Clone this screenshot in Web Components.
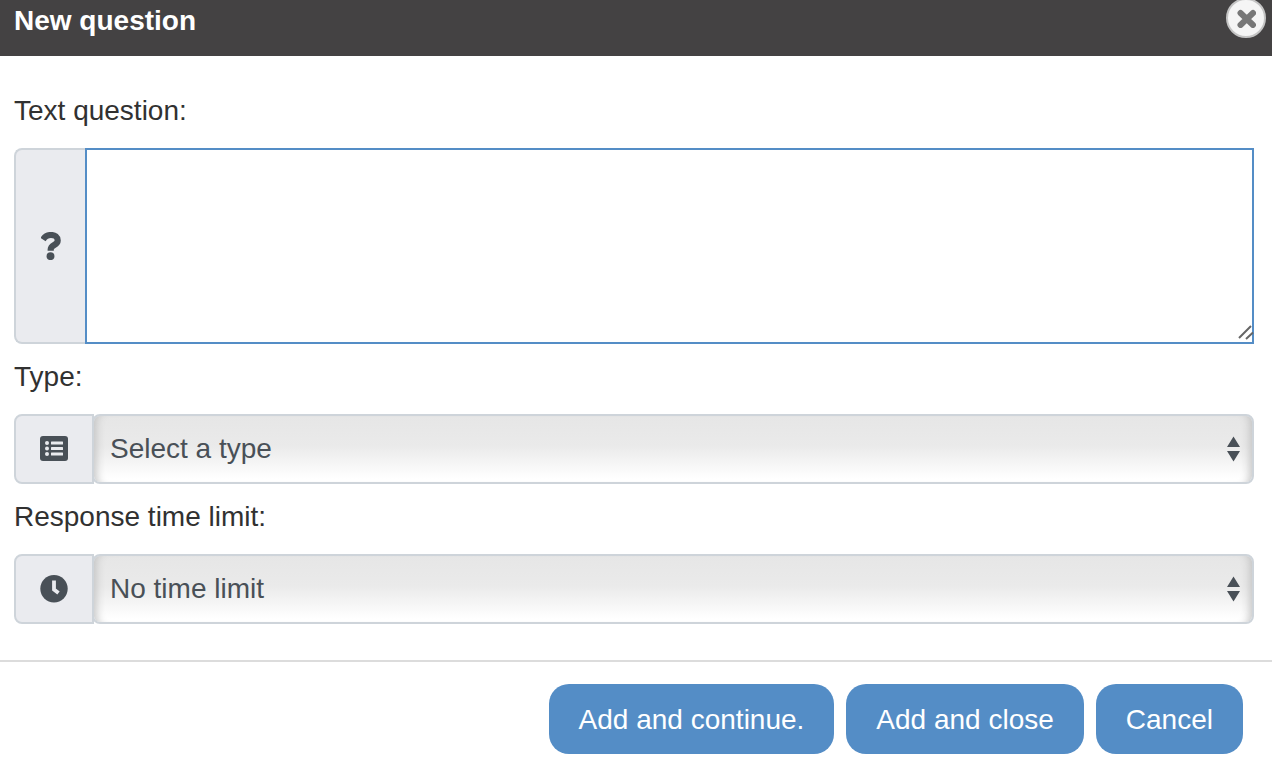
<!DOCTYPE html>
<html lang="en">
<head>
<meta charset="utf-8">
<meta name="viewport" content="width=device-width, initial-scale=1">
<title>New question</title>
<style>
  body {
    margin: 0;
    background: #fff;
    color: #313131;
    font: 28px/42px "Liberation Sans", Arial, sans-serif;
  }
</style>
</head>
<body>

<question-dialog heading="New question">
  <text-field label="Text question:" name="text">
    <svg slot="icon" width="20" height="28" viewBox="0 0 20 28" fill="none" stroke="#495057" aria-hidden="true">
      <path d="M2 7.500C4 4.300 6.500 3 10 3C14 3 16.700 5.200 16.700 8.500C16.700 13.500 9.700 12.500 9.700 17.500V18.700" stroke-width="6.200"/>
      <circle cx="9.500" cy="24.200" r="3.900" fill="#495057" stroke="none"/>
    </svg>
  </text-field>
  <select-field label="Type:" name="type" placeholder="Select a type">
    <svg slot="icon" width="28" height="26" viewBox="0 0 28 26" aria-hidden="true">
      <rect width="28" height="25" rx="3" fill="#495057"/>
      <g fill="#eaebef">
        <circle cx="7" cy="7" r="2"/>
        <circle cx="7" cy="12.500" r="2"/>
        <circle cx="7" cy="18" r="2"/>
        <rect x="11" y="5.500" width="12" height="3" rx="0.500"/>
        <rect x="11" y="11" width="12" height="3" rx="0.500"/>
        <rect x="11" y="16.500" width="12" height="3" rx="0.500"/>
      </g>
    </svg>
  </select-field>
  <select-field label="Response time limit:" name="limit" placeholder="No time limit">
    <svg slot="icon" width="28" height="28" viewBox="0 0 28 28" aria-hidden="true">
      <circle cx="14" cy="13.700" r="13.700" fill="#495057"/>
      <path d="M14 5.500V14.500L18.500 18" fill="none" stroke="#eaebef" stroke-width="3.800"/>
    </svg>
  </select-field>
  <dialog-button slot="actions">Add and continue.</dialog-button>
  <dialog-button slot="actions">Add and close</dialog-button>
  <dialog-button slot="actions">Cancel</dialog-button>
</question-dialog>

<template id="dialog-template">
  <style>
    :host {
      display: block;
    }

    header {
      display: flex;
      justify-content: space-between;
      align-items: flex-start;
      padding: 0 6px 14px 14px;
      background: #444243;
      color: #fff;
    }

    h1 {
      margin: 0;
      font-size: 28px;
      line-height: 42px;
    }

    .close {
      display: flex;
      align-items: center;
      justify-content: center;
      box-sizing: border-box;
      width: 40px;
      height: 40px;
      margin: -2px 0 0;
      padding: 0;
      border: 2px solid #c4c4c4;
      border-radius: 50%;
      background: #f5f5f5;
    }

    .body {
      padding: 22px 18px 36px 14px;
    }

    footer {
      display: flex;
      flex-wrap: wrap;
      justify-content: flex-end;
      gap: 12px;
      padding: 22px 29px 16px;
      border-top: 2px solid #dcdcdc;
    }
  </style>
  <header>
    <h1></h1>
    <button class="close" type="button" aria-label="Close">
      <svg width="20" height="20" viewBox="0 0 20 20" aria-hidden="true">
        <path d="M4.500 5L17 17M17 5L4.500 17" stroke="#777" stroke-width="6" stroke-linecap="round"/>
      </svg>
    </button>
  </header>
  <div class="body"><slot></slot></div>
  <footer><slot name="actions"></slot></footer>
</template>

<template id="text-field-template">
  <style>
    :host {
      display: block;
    }

    label {
      display: block;
      padding: 12px 0 16px;
    }

    .group {
      display: flex;
    }

    .addon {
      display: flex;
      align-items: center;
      justify-content: center;
      box-sizing: border-box;
      width: 71px;
      border: 2px solid #ced4da;
      border-right: 0;
      border-radius: 8px 0 0 8px;
      background: #eaebef;
    }

    .area {
      position: relative;
      display: flex;
      flex: 1;
    }

    textarea {
      flex: 1;
      box-sizing: border-box;
      min-width: 0;
      margin: 0;
      padding: 12px 16px;
      border: 2px solid #548dc6;
      border-radius: 0;
      outline: 0;
      background: #fff;
      color: #495057;
      font: inherit;
      resize: none;
    }

    .grip {
      position: absolute;
      right: 0;
      bottom: 4px;
      pointer-events: none;
    }
  </style>
  <label for="control"></label>
  <div class="group">
    <div class="addon"><slot name="icon"></slot></div>
    <div class="area">
      <textarea id="control" rows="4"></textarea>
      <svg class="grip" width="16" height="16" viewBox="0 0 16 16" aria-hidden="true">
        <path d="M1 14L13 2M8 15L15 8.500" stroke="#666" stroke-width="2"/>
      </svg>
    </div>
  </div>
</template>

<template id="select-field-template">
  <style>
    :host {
      display: block;
    }

    label {
      display: block;
      padding: 12px 0 16px;
    }

    .group {
      display: flex;
    }

    .addon {
      display: flex;
      align-items: center;
      justify-content: center;
      box-sizing: border-box;
      width: 80px;
      border: 2px solid #ced4da;
      border-radius: 8px 0 0 8px;
      background: #eaebef;
    }

    .picker {
      position: relative;
      display: flex;
      flex: 1;
      margin-left: -2px;
    }

    select {
      appearance: none;
      flex: 1;
      min-width: 0;
      height: 70px;
      margin: 0;
      padding: 0 40px 0 16px;
      border: 2px solid #ced4da;
      border-radius: 8px;
      outline: 0;
      background: linear-gradient(#e6e6e6, #eaeaea 45%, #fff 95%);
      box-shadow: inset 10px 0 10px -8px #c0c0c0, inset -10px 0 10px -8px #c0c0c0;
      color: #495057;
      font: inherit;
    }

    .arrows {
      position: absolute;
      top: 22px;
      right: 13px;
      pointer-events: none;
    }
  </style>
  <label for="control"></label>
  <div class="group">
    <div class="addon"><slot name="icon"></slot></div>
    <div class="picker">
      <select id="control"></select>
      <svg class="arrows" width="14" height="26" viewBox="0 0 14 26" fill="#495057" aria-hidden="true">
        <path d="M0 11L6.500 0.500L13 11ZM0 15H13L6.500 25.500Z"/>
      </svg>
    </div>
  </div>
</template>

<template id="button-template">
  <style>
    :host {
      display: block;
    }

    button {
      height: 70px;
      margin: 0;
      padding: 2px 30px 0;
      border: 0;
      border-radius: 20px;
      background: #548dc6;
      color: #fff;
      font: inherit;
      cursor: pointer;
    }
  </style>
  <button type="button"><slot></slot></button>
</template>

<script>
class TemplateElement extends HTMLElement {
  constructor(templateId) {
    super();
    const template = document.getElementById(templateId);
    this._shadowRoot = this.attachShadow({ mode: 'open' });
    this._shadowRoot.appendChild(template.content.cloneNode(true));
  }
}

class QuestionDialog extends TemplateElement {
  constructor() {
    super('dialog-template');
    this.$heading = this._shadowRoot.querySelector('h1');
    this.$close = this._shadowRoot.querySelector('.close');
    this.$close.addEventListener('click', this._onClose.bind(this));
  }

  connectedCallback() {
    this.$heading.textContent = this.getAttribute('heading');
  }

  _onClose() {
    this.style.display = 'none';
    this.dispatchEvent(new Event('close'));
  }
}

class TextField extends TemplateElement {
  constructor() {
    super('text-field-template');
    this.$label = this._shadowRoot.querySelector('label');
    this.$input = this._shadowRoot.querySelector('textarea');
  }

  connectedCallback() {
    this.$label.textContent = this.getAttribute('label');
    this.$input.name = this.getAttribute('name');
  }
}

class SelectField extends TemplateElement {
  constructor() {
    super('select-field-template');
    this.$label = this._shadowRoot.querySelector('label');
    this.$select = this._shadowRoot.querySelector('select');
  }

  connectedCallback() {
    this.$label.textContent = this.getAttribute('label');
    this.$select.name = this.getAttribute('name');

    const option = document.createElement('option');
    option.value = '';
    option.textContent = this.getAttribute('placeholder');
    this.$select.replaceChildren(option);
  }
}

class DialogButton extends TemplateElement {
  constructor() {
    super('button-template');
  }
}

customElements.define('question-dialog', QuestionDialog);
customElements.define('text-field', TextField);
customElements.define('select-field', SelectField);
customElements.define('dialog-button', DialogButton);
</script>
</body>
</html>
